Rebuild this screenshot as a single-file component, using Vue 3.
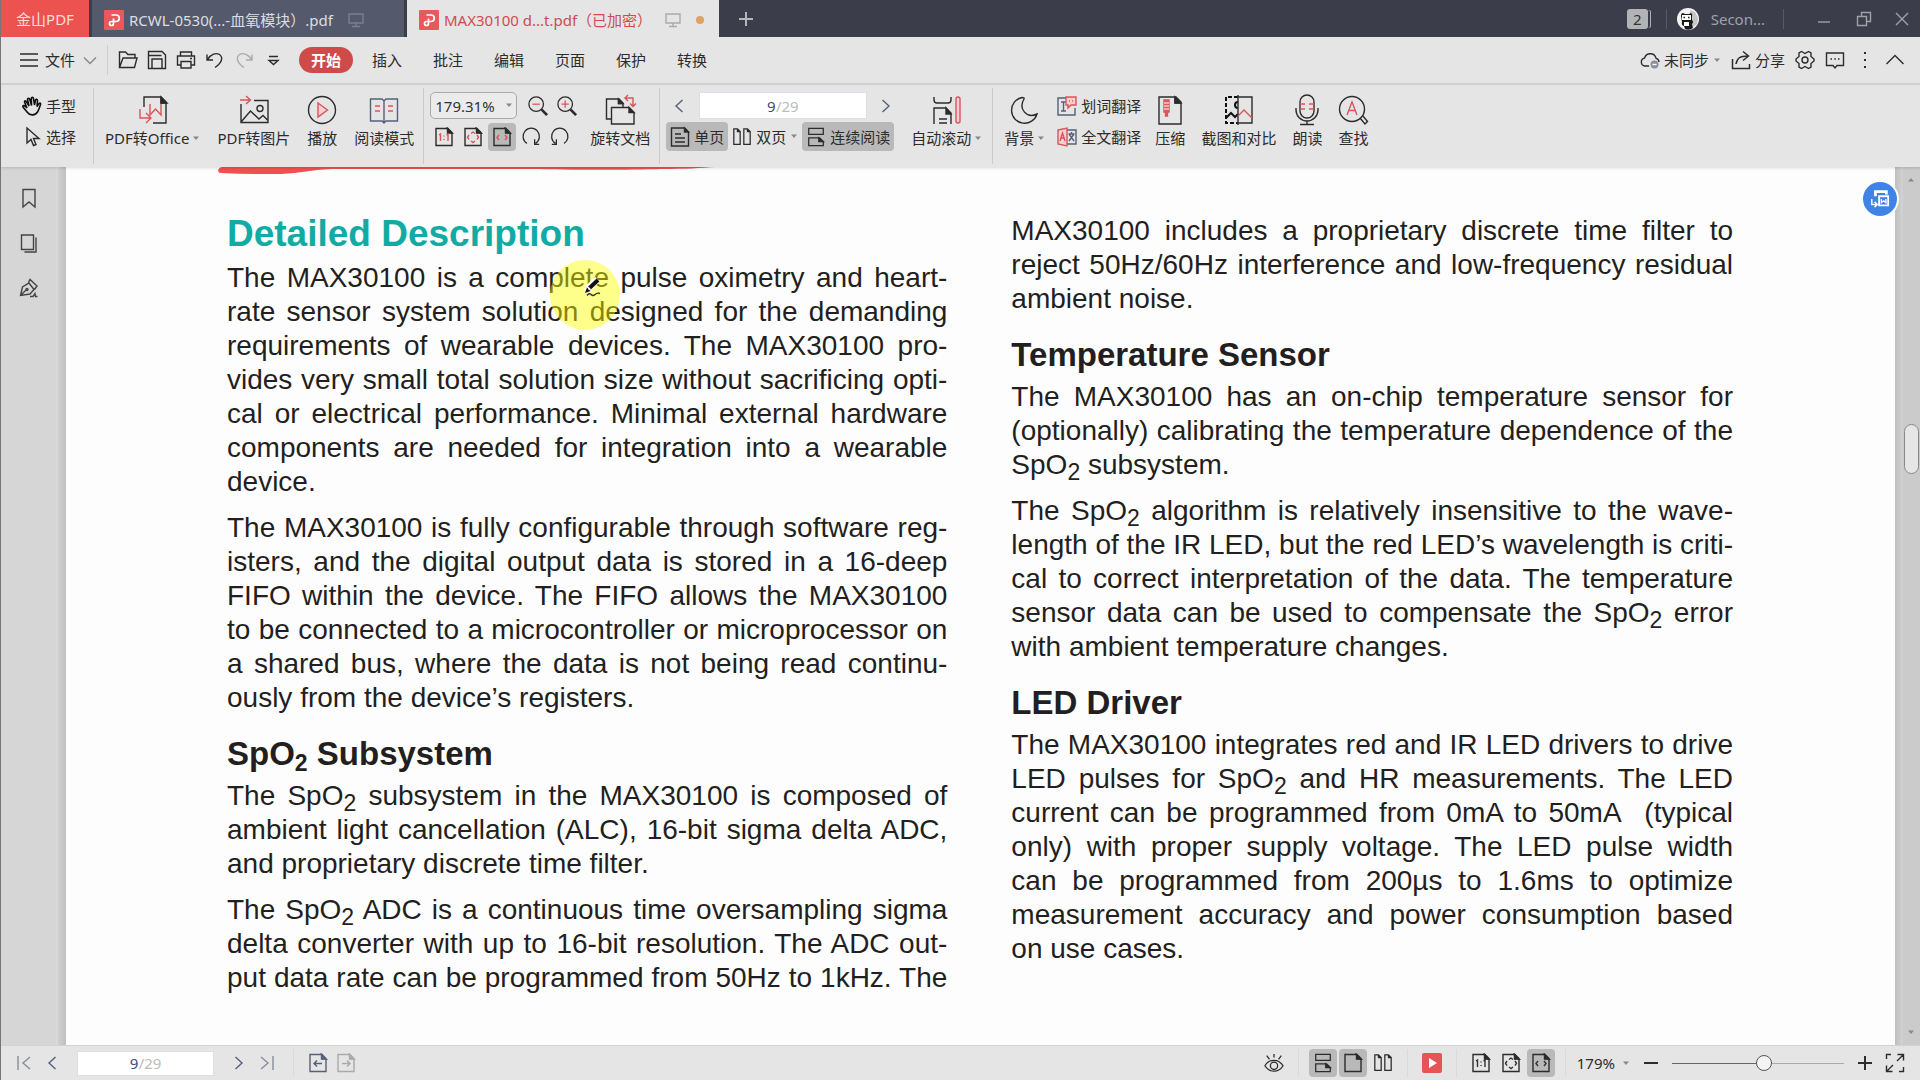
<script setup>
import { ref } from 'vue';

const zoom = ref('179.31%');
const page = ref('9');
const slider = ref(54);
const activeMenu = ref('开始');

const menus = ['开始', '插入', '批注', '编辑', '页面', '保护', '转换'];

const leftColumn = [
  { type: 'title', text: 'Detailed Description' },
  {
    type: 'para',
    lines: [
      'The MAX30100 is a complete pulse oximetry and heart-',
      'rate sensor system solution designed for the demanding',
      'requirements of wearable devices. The MAX30100 pro-',
      'vides very small total solution size without sacrificing opti-',
      'cal or electrical performance. Minimal external hardware',
      'components are needed for integration into a wearable',
      'device.'
    ]
  },
  {
    type: 'para',
    lines: [
      'The MAX30100 is fully configurable through software reg-',
      'isters, and the digital output data is stored in a 16-deep',
      'FIFO within the device. The FIFO allows the MAX30100',
      'to be connected to a microcontroller or microprocessor on',
      'a shared bus, where the data is not being read continu-',
      'ously from the device’s registers.'
    ]
  },
  { type: 'heading', text: 'SpO2 Subsystem' },
  {
    type: 'para',
    lines: [
      'The SpO2 subsystem in the MAX30100 is composed of',
      'ambient light cancellation (ALC), 16-bit sigma delta ADC,',
      'and proprietary discrete time filter.'
    ]
  },
  {
    type: 'para',
    continues: true,
    lines: [
      'The SpO2 ADC is a continuous time oversampling sigma',
      'delta converter with up to 16-bit resolution. The ADC out-',
      'put data rate can be programmed from 50Hz to 1kHz. The'
    ]
  }
];

const rightColumn = [
  {
    type: 'para',
    lines: [
      'MAX30100 includes a proprietary discrete time filter to',
      'reject 50Hz/60Hz interference and low-frequency residual',
      'ambient noise.'
    ]
  },
  { type: 'heading', text: 'Temperature Sensor' },
  {
    type: 'para',
    lines: [
      'The MAX30100 has an on-chip temperature sensor for',
      '(optionally) calibrating the temperature dependence of the',
      'SpO2 subsystem.'
    ]
  },
  {
    type: 'para',
    lines: [
      'The SpO2 algorithm is relatively insensitive to the wave-',
      'length of the IR LED, but the red LED’s wavelength is criti-',
      'cal to correct interpretation of the data. The temperature',
      'sensor data can be used to compensate the SpO2 error',
      'with ambient temperature changes.'
    ]
  },
  { type: 'heading', text: 'LED Driver' },
  {
    type: 'para',
    lines: [
      'The MAX30100 integrates red and IR LED drivers to drive',
      'LED pulses for SpO2 and HR measurements. The LED',
      'current can be programmed from 0mA to 50mA\u00a0 (typical',
      'only) with proper supply voltage. The LED pulse width',
      'can be programmed from 200µs to 1.6ms to optimize',
      'measurement accuracy and power consumption based',
      'on use cases.'
    ]
  }
];

const columns = [leftColumn, rightColumn];

// the 2 of SpO2 becomes a part of its own
function parts(text) {
  return text.split(/(?<=SpO)(2)/);
}
</script>

<template>
  <svg class="sprite" aria-hidden="true">
    <symbol id="logo" viewBox="0 0 20 20">
      <rect width="20" height="20" rx="1" fill="#e9585a" stroke="none" />
      <path d="M7.500 5h4.500a3 3 0 0 1 0 6.500H7.500a2 2 0 1 0 2 2V8.500" stroke="#fff" stroke-width="1.700" />
    </symbol>
    <symbol id="monitor" viewBox="0 0 16 16">
      <path d="M1 2h14v9H1zM8 11v3M4 14.500h8" />
    </symbol>
    <symbol id="caret" viewBox="0 0 8 5"><path d="M1 0.500h6L4 4z" fill="#888" stroke="none" /></symbol>
    <symbol id="prev" viewBox="0 0 10 16"><path d="M8.500 2L2 8l6.500 6" /></symbol>
    <symbol id="next" viewBox="0 0 10 16"><path d="M1.500 2L8 8l-6.500 6" /></symbol>
    <symbol id="page" viewBox="0 0 20 20">
      <path d="M2 1.500h12l4 4v13H2zM13.500 1.500l.5 4 4 .5z" />
      <path d="M13.500 1.500v4.500H18z" fill="currentColor" />
    </symbol>
    <symbol id="page-fit" viewBox="0 0 20 20">
      <use href="#page" />
      <path d="M8 6.500l2-1.500 2 1.500M8 14l2 1.500 2-1.500M6 8l-1.500 2.300L6 12.500M14 8l1.500 2.300-1.500 2.200" class="accent" />
    </symbol>
    <symbol id="page-width" viewBox="0 0 20 20">
      <use href="#page" />
      <path d="M7 8l-2 2.500L7 13M13 8l2 2.500-2 2.500" class="accent" />
    </symbol>
    <symbol id="page-real" viewBox="0 0 20 20">
      <use href="#page" />
      <path d="M5 8l1.500-1v7M12.500 8l1.500-1v7M10 8.500v1M10 12v1" class="accent" />
    </symbol>
    <symbol id="two-pages" viewBox="0 0 22 22">
      <path d="M2 2h4l3 3v14H2zM13 2h4l3 3v14h-7zM6 2v3h3M17 2v3h3" />
    </symbol>
    <symbol id="continuous" viewBox="0 0 20 22">
      <path d="M2 1.500h16V8H2zM2 20.500V12h12l4 4v4.500z" /><path d="M13 12v4h5z" fill="currentColor" />
    </symbol>
  </svg>

  <div class="app">
    <header class="tabs">
      <button class="home">金山PDF</button>
      <button class="tab">
        <svg class="i20"><use href="#logo" /></svg>
        <span class="name">RCWL-0530(...-血氧模块）.pdf</span>
        <svg class="i16 dim"><use href="#monitor" /></svg>
      </button>
      <button class="tab current">
        <svg class="i20"><use href="#logo" /></svg>
        <span class="name">MAX30100 d...t.pdf（已加密）</span>
        <svg class="i16 dim"><use href="#monitor" /></svg>
        <i class="unsaved"></i>
      </button>
      <button class="plus" aria-label="新建">
        <svg class="i16" viewBox="0 0 16 16"><path d="M8 1v14M1 8h14" stroke-width="2" /></svg>
      </button>
      <div class="window">
        <span class="count">2</span>
        <i class="bar"></i>
        <svg class="avatar" viewBox="0 0 22 22">
          <circle cx="11" cy="11" r="11" fill="#f3f3f3" stroke="none" />
          <path d="M13 2l5 2 3 6-1 6-4 3-3-8z" fill="#c4c6c4" stroke="none" />
          <path d="M4 8q0-3 2-3l2 1h4l2-1q2 1 1 3v4q2 2 0 4l1 4q-4 3-8 1l-1-3q-3-1-2-4z" fill="#191919" stroke="none" />
          <path d="M5 7h9v5H5zM7 14h5v4H7z" fill="#fff" stroke="none" />
          <path d="M6.500 9.500H8M11 9.500h1.500" stroke="#191919" />
        </svg>
        <span class="user">Secon...</span>
        <i class="bar"></i>
        <button class="min" aria-label="最小化"><svg class="i16" viewBox="0 0 16 16"><path d="M2 11h12" /></svg></button>
        <button class="restore" aria-label="还原">
          <svg class="i16" viewBox="0 0 16 16"><path d="M1.500 5.500h9v9h-9zM5.500 5.500v-4h9v9h-4" /></svg>
        </button>
        <button class="close" aria-label="关闭"><svg class="i16" viewBox="0 0 16 16"><path d="M2 2l12 12M14 2L2 14" /></svg></button>
      </div>
    </header>

    <nav class="menu">
      <button class="file">
        <svg class="i20" viewBox="0 0 20 20"><path d="M1 4h18M1 10h18M1 16h18" /></svg>
        文件
        <svg class="chev" viewBox="0 0 14 14"><path d="M1 4.500l6 6 6-6" /></svg>
      </button>
      <div class="quick">
        <button aria-label="打开">
          <svg class="i20" viewBox="0 0 20 20"><path d="M1.500 17.500V2h6l2.500 2.500h7V8M1.500 17.500L5 8h14l-2.500 9.500z" /></svg>
        </button>
        <button aria-label="保存">
          <svg class="i20" viewBox="0 0 20 20"><path d="M1.500 1.500H15L18.500 5v13.500h-17zM1.500 5.500h13M5 18.500V9h10v9.500" /></svg>
        </button>
        <button aria-label="打印">
          <svg class="i20" viewBox="0 0 20 20"><path d="M4.500 6V2h11v4M4.500 15h-3V6h17v9h-3M5 11.500h10v6.500H5zM14 8.500h2" /></svg>
        </button>
        <button aria-label="撤销">
          <svg class="i20" viewBox="0 0 20 20"><path d="M2 4.500v5.500h6M2.500 9.500C6 4 11 2.500 14.500 4.500c4 3 2.500 8-4.500 13" /></svg>
        </button>
        <button aria-label="重做" class="dim">
          <svg class="i20" viewBox="0 0 20 20"><path d="M18 4.500v5.500h-6M17.500 9.500C14 4 9 2.500 5.500 4.500c-4 3-2.500 8 4.500 13" /></svg>
        </button>
        <button aria-label="更多">
          <svg class="i20" viewBox="0 0 20 20"><path d="M6 6.500h9M6 10.500l4.500 4 4.500-4z" /></svg>
        </button>
      </div>
      <div class="menus">
        <button
          v-for="item in menus"
          :key="item"
          :class="{ active: item === activeMenu }"
          @click="activeMenu = item"
        >{{ item }}</button>
      </div>
      <div class="extras">
        <button>
          <svg class="i20" viewBox="0 0 20 20">
            <path d="M9 16H5a4 4 0 0 1-.5-7.900 6 6 0 0 1 11.600.2A4 4 0 0 1 19 12" />
            <circle cx="14.500" cy="14.500" r="4" fill="#8b90a0" stroke="none" /><path d="M12.500 14.500h4" stroke="#fff" />
          </svg>
          未同步<svg class="caret"><use href="#caret" /></svg>
        </button>
        <button>
          <svg class="i20" viewBox="0 0 20 20"><path d="M1.500 9v9.500h17V14M5 14c1-6 4-8 12-8M12 1.500L17.500 6 12 10.500" stroke-width="1.500" /></svg>
          分享
        </button>
        <button aria-label="设置">
          <svg class="i20" viewBox="0 0 20 20">
            <path d="M6.500 1.500L10 3.500l3.500-2 2.500 1.500v3.500L19 9v2l-3 2.500V17l-2.500 1.500-3.500-2-3.500 2L4 17v-3.500L1 11V9l3-2.500V3z" />
            <circle cx="10" cy="10" r="3" />
          </svg>
        </button>
        <button aria-label="反馈">
          <svg class="i20" viewBox="0 0 20 20"><path d="M1.500 3h17v12.500H12L10 18l-2-2.500H1.500z" /><path d="M5.500 9h1.500M9.300 9h1.500M13 9h1.500" stroke-width="1.500" /></svg>
        </button>
        <button aria-label="更多选项">
          <svg class="i20" viewBox="0 0 20 20"><path d="M9 3h2M9 10h2M9 17h2" stroke-width="2" /></svg>
        </button>
        <button aria-label="收起">
          <svg class="i20" viewBox="0 0 20 20"><path d="M1.500 14L10 5.500l8.500 8.500" /></svg>
        </button>
      </div>
    </nav>

    <section class="toolbar">
      <div class="group modes">
        <div class="stack">
          <button class="line">
            <svg class="i20" viewBox="0 0 20 20">
              <path d="M5.500 16.500L1 11c-.5-1.500 1-2 2.500-.5L5 12 2.500 6c0-1.500 1.500-1.500 2 0L7 10 5.500 3.500c0-1.700 2-1.700 2.300 0L9.500 9.500 9.300 2.500c.2-1.500 2-1.500 2.200 0L12.500 9l1-5c.5-1.300 2-.8 2 .5l-.5 6 2-3c1-1 2-.3 1.500 1-1 3-1.500 5-3 7.500-2 3.500-7.500 4-10 .5z" class="ink" />
            </svg>
            手型
          </button>
          <button class="line">
            <svg class="i20" viewBox="0 0 20 20"><path d="M5 1v15l4-3.500 2.500 6 2.500-1-2.500-6H17z" /></svg>
            选择
          </button>
        </div>
      </div>

      <div class="group">
        <button class="tool">
          <svg class="i30" viewBox="0 0 30 30">
            <path d="M6 12V2h17l5 5v21H15M23 2v6h6" /><path d="M23 2v6h6z" fill="currentColor" />
            <path d="M12 9v11l5.500-6 5.500 6V9M2 14v9h10M8 18l5 5-5 5" class="accent" />
          </svg>
          <span>PDF转Office<svg class="caret"><use href="#caret" /></svg></span>
        </button>
        <button class="tool">
          <svg class="i30" viewBox="0 0 30 30">
            <path d="M15 5.500h14v22H2V9M2 27l9.500-11L20 24l4-3.500 5 5" /><circle cx="21" cy="13.500" r="3" />
            <path d="M1 5h10M7 1l4.500 4L7 9" class="accent" />
          </svg>
          <span>PDF转图片</span>
        </button>
        <button class="tool">
          <svg class="i30" viewBox="0 0 30 30"><circle cx="15" cy="15" r="13.500" /><path d="M11 8l9.500 7L11 22z" class="accent tint" /></svg>
          <span>播放</span>
        </button>
        <button class="tool">
          <svg class="i30 slate" viewBox="0 0 30 30">
            <path d="M1.500 4H13l2 2 2-2h11.500v22H17l-2 2-2-2H1.500zM15 6v21" />
            <path d="M6 11h5M6 16h5M19 11h5M19 16h5" class="accent" />
          </svg>
          <span>阅读模式</span>
        </button>
      </div>

      <div class="group zooming">
        <div class="stack">
          <div class="row">
            <label class="zoom">
              <select v-model="zoom" aria-label="缩放比例"><option>179.31%</option></select>
              <svg class="caret"><use href="#caret" /></svg>
            </label>
            <button class="mini" aria-label="缩小">
              <svg class="i22" viewBox="0 0 22 22"><circle cx="9" cy="9" r="8" /><path d="M15 15l6 6" stroke-width="3" /><path d="M5 9h8" class="accent" /></svg>
            </button>
            <button class="mini" aria-label="放大">
              <svg class="i22" viewBox="0 0 22 22"><circle cx="9" cy="9" r="8" /><path d="M15 15l6 6" stroke-width="3" /><path d="M5 9h8M9 5v8" class="accent" /></svg>
            </button>
          </div>
          <div class="row">
            <button class="mini" aria-label="实际大小"><svg class="i22 red"><use href="#page-real" /></svg></button>
            <button class="mini" aria-label="适合页面"><svg class="i22 red"><use href="#page-fit" /></svg></button>
            <button class="mini on" aria-label="适合宽度"><svg class="i22 red"><use href="#page-width" /></svg></button>
            <button class="mini" aria-label="顺时针旋转">
              <svg class="i22" viewBox="0 0 22 22"><path d="M6.500 18A9 9 0 1 1 16 18M15 13.500V19h5" /></svg>
            </button>
            <button class="mini" aria-label="逆时针旋转">
              <svg class="i22" viewBox="0 0 22 22"><path d="M15.500 18A9 9 0 1 0 6 18M7 13.500V19H2" /></svg>
            </button>
          </div>
        </div>
        <button class="tool">
          <svg class="i30" viewBox="0 0 30 30">
            <path d="M6 24H1.500V4H14l4 4v4M13.500 4v4.500H18M6.500 12.500H24l5 5V29H6.500z" /><path d="M13.500 4v4.500H18zM24 12.500v5h5z" fill="currentColor" />
            <path d="M23 0l-3 3 3 3M20 3h8v8M25 8.500l3 3 3-3" class="accent" />
          </svg>
          <span>旋转文档</span>
        </button>
      </div>

      <div class="group paging">
        <div class="stack">
          <div class="row pager">
            <button class="arrow" aria-label="上一页"><svg><use href="#prev" /></svg></button>
            <label class="pagebox"><input v-model="page" aria-label="页码" /><span>/29</span></label>
            <button class="arrow" aria-label="下一页"><svg><use href="#next" /></svg></button>
          </div>
          <div class="row views">
            <button class="view on">
              <svg class="i20" viewBox="0 0 20 20"><path d="M1.500 1h13l4 4v14h-17z" /><path d="M14.500 1v4h4z" fill="currentColor" /><path d="M5 7h6M5 11h10M5 15h10" /></svg>
              单页
            </button>
            <button class="view">
              <svg class="i20"><use href="#two-pages" /></svg>
              双页<svg class="caret"><use href="#caret" /></svg>
            </button>
            <button class="view on">
              <svg class="i20"><use href="#continuous" /></svg>
              连续阅读
            </button>
          </div>
        </div>
        <button class="tool">
          <svg class="i30" viewBox="0 0 30 30">
            <path d="M2 2v3c0 2 1 3 3 3h11c2 0 3-1 3-3V2M2 29V13h12l5 5v11M7 24h8M7 28h8" /><path d="M14 13v6h5z" fill="currentColor" />
            <rect x="24" y="2" width="4" height="26" rx="2" class="accent tint" />
          </svg>
          <span>自动滚动<svg class="caret"><use href="#caret" /></svg></span>
        </button>
      </div>

      <div class="group last">
        <button class="tool">
          <svg class="i30" viewBox="0 0 30 30"><path d="M12 2.500A13 13 0 1 0 27 19C17 24 8 14 14 4q.5-1.500-2-1.500z" /></svg>
          <span>背景<svg class="caret"><use href="#caret" /></svg></span>
        </button>
        <div class="stack">
          <button class="line">
            <svg class="i20 slate" viewBox="0 0 20 20">
              <path d="M9 2H1v17h17v-7M4 6h5M6.500 6v9M4 15h5" /><path d="M9 1h10v8h-5l-3 3V9H9z" class="accent tint" /><path d="M12 5h1M15 5h1" class="accent" />
            </svg>
            划词翻译
          </button>
          <button class="line">
            <svg class="i20 slate" viewBox="0 0 20 20">
              <path d="M10 3h9v14h-9M11.500 7h6M14.500 5v2M12 14l5-7M12 7l5 7" /><path d="M1 3l9-2v18l-9-2zM3 14l2.500-8L8 14M4 11h3" class="accent tint" />
            </svg>
            全文翻译
          </button>
        </div>
        <button class="tool">
          <svg class="i30" viewBox="0 0 30 30">
            <path d="M4 2h17l5 5v22H4zM20 2v6h6" /><path d="M20 2v6h6z" fill="currentColor" />
            <path d="M9 5h5v12h-1.500v4h-2v-4H9z" fill="#e55a5e" class="accent" /><path d="M9 8h5M9 11h5M9 14h5" stroke="#f3caca" />
          </svg>
          <span>压缩</span>
        </button>
        <button class="tool">
          <svg class="i30" viewBox="0 0 30 30">
            <path d="M14 2H2v26h12" stroke="#111" stroke-width="2" stroke-dasharray="4 2" />
            <path d="M14 7a3 3 0 1 0 0 6M2 23l5-5 4 4 3-3" stroke="#111" stroke-width="2" />
            <path d="M14 0v30M14 2h14v26H14" /><path d="M14 21l6-6 8 8" class="accent" />
          </svg>
          <span>截图和对比</span>
        </button>
        <button class="tool">
          <svg class="i30" viewBox="0 0 30 30">
            <rect x="8" y="0" width="14" height="23" rx="7" /><path d="M4 13v2a11 11 0 0 0 22 0v-2M15 26v3.500M8 29.500h14" />
            <path d="M8 9h5M17 9h5M8 14h5M17 14h5" class="accent" />
          </svg>
          <span>朗读</span>
        </button>
        <button class="tool">
          <svg class="i30" viewBox="0 0 30 30">
            <circle cx="14" cy="14" r="12.500" /><path d="M22 23l5 6 2.500-2.500-5-6" /><path d="M9 20l5-13 5 13M11 15.500h6" class="accent" />
          </svg>
          <span>查找</span>
        </button>
      </div>
    </section>

    <main class="work">
      <aside class="side">
        <button aria-label="书签"><svg class="i20" viewBox="0 0 20 20"><path d="M4 1.500h12V19l-6-5-6 5z" /></svg></button>
        <button aria-label="缩略图"><svg class="i20" viewBox="0 0 20 20"><path d="M2.500 2h12v14.500h-12zM17 4.500V19H5.500" /></svg></button>
        <button aria-label="签名">
          <svg class="i20" viewBox="0 0 20 20"><path d="M1.500 17.500L3.500 9 10 5l5 6.500L11 16zM9.500 4.500L11 1.500 18 8l-2.500 3.500M2 17l5-5M11 18.500h3l2-3 .5 3h2" /><circle cx="8" cy="11.500" r="1" /></svg>
        </button>
      </aside>
      <article class="sheet">
        <svg class="stroke" viewBox="0 0 500 8">
          <path d="M4 0C-1 1-1 6 3 6c20 1 40 1 60 1 20-1 30-4 50-5h200c40 1 100 1 130 0 25 0 40-1 54-2z" fill="#ef5150" stroke="none" />
        </svg>
        <div v-for="(column, c) in columns" :key="c" class="column">
          <template v-for="(block, b) in column" :key="b">
            <h1 v-if="block.type === 'title'">{{ block.text }}</h1>
            <h2 v-else-if="block.type === 'heading'">
              <template v-for="(part, i) in parts(block.text)" :key="i"><sub v-if="part === '2'">2</sub><template v-else>{{ part }}</template></template>
            </h2>
            <p v-else :class="{ continues: block.continues }">
              <span v-for="line in block.lines" :key="line">
                <template v-for="(part, i) in parts(line)" :key="i"><sub v-if="part === '2'">2</sub><template v-else>{{ part }}</template></template>
              </span>
            </p>
          </template>
        </div>
        <i class="halo"></i>
        <svg class="pen" viewBox="0 0 18 20">
          <path d="M3 13l2-3.500L13.500 1.500" stroke="#fff" stroke-width="7" />
          <path d="M5.500 10L14 2" stroke="#111" stroke-width="4" />
          <path d="M1 15l2-5.500L6.500 13z" fill="#111" stroke="none" />
          <path d="M4.500 11.500L6 10" stroke="#fff" stroke-width="1.500" />
          <path d="M3 17.500q2-3 4-1t4 0 5-1" stroke="#333" />
        </svg>
        <button class="convert" aria-label="转换">
          <svg class="i22" viewBox="0 0 22 22">
            <path d="M6 8V3h12v3" stroke="#fff" stroke-width="3" /><path d="M10 8h10v10H10z" stroke="#fff" stroke-width="2" />
            <path d="M12.500 11v4l2.500-2 2.500 2v-4M2 11v6h5M5 14l3 3-3 3" stroke="#fff" stroke-width="1.500" />
          </svg>
        </button>
      </article>
      <div class="scroll">
        <svg class="tip up"><use href="#caret" /></svg>
        <i class="before"></i>
        <i class="thumb"></i>
        <i class="after"></i>
        <svg class="tip"><use href="#caret" /></svg>
      </div>
    </main>

    <footer class="status">
      <button class="arrow" aria-label="首页"><svg class="end" viewBox="0 0 16 16"><path d="M2 1v14M14 2L7 8l7 6" /></svg></button>
      <button class="arrow" aria-label="上一页"><svg><use href="#prev" /></svg></button>
      <label class="pagebox"><input v-model="page" aria-label="页码" /><span>/29</span></label>
      <button class="arrow" aria-label="下一页"><svg><use href="#next" /></svg></button>
      <button class="arrow" aria-label="末页"><svg class="end" viewBox="0 0 16 16"><path d="M14 1v14M2 2l7 6-7 6" /></svg></button>
      <i class="sep"></i>
      <button class="mini slate" aria-label="后退">
        <svg class="i22" viewBox="0 0 20 20"><use href="#page" width="20" height="20" /><path d="M6 10.500h8M9 7.500l-3 3 3 3" /></svg>
      </button>
      <button class="mini dim" aria-label="前进">
        <svg class="i22" viewBox="0 0 20 20"><use href="#page" width="20" height="20" /><path d="M6 10.500h8M11 7.500l3 3-3 3" /></svg>
      </button>

      <div class="right">
        <button class="mini" aria-label="护眼">
          <svg class="i22" viewBox="0 0 22 22"><path d="M1 14c5-8 15-8 20 0-5 8-15 8-20 0zM11 1v4M3 3l3 4M19 3l-3 4" /><circle cx="11" cy="14" r="4" /></svg>
        </button>
        <i class="sep"></i>
        <div class="set">
          <button class="mini on" aria-label="连续"><svg class="i22"><use href="#continuous" /></svg></button>
          <button class="mini on" aria-label="单页"><svg class="i22"><use href="#page" /></svg></button>
          <button class="mini" aria-label="双页"><svg class="i22"><use href="#two-pages" /></svg></button>
        </div>
        <i class="sep"></i>
        <button class="mini" aria-label="播放">
          <svg class="i20" viewBox="0 0 20 20"><rect width="20" height="20" rx="2" fill="#e45557" stroke="none" /><path d="M7 5l8 5-8 5z" fill="#fff" stroke="none" /></svg>
        </button>
        <i class="sep"></i>
        <div class="set">
          <button class="mini" aria-label="实际大小"><svg class="i22"><use href="#page-real" /></svg></button>
          <button class="mini" aria-label="适合页面"><svg class="i22"><use href="#page-fit" /></svg></button>
          <button class="mini on" aria-label="适合宽度"><svg class="i22"><use href="#page-width" /></svg></button>
        </div>
        <i class="sep"></i>
        <button class="percent">179%<svg class="caret"><use href="#caret" /></svg></button>
        <button class="step" aria-label="缩小"><svg class="i16" viewBox="0 0 16 16"><path d="M1 8h14" stroke-width="2" /></svg></button>
        <input v-model="slider" class="slider" type="range" min="0" max="100" aria-label="缩放" />
        <button class="step" aria-label="放大"><svg class="i16" viewBox="0 0 16 16"><path d="M1 8h14M8 1v14" stroke-width="2" /></svg></button>
        <button class="full" aria-label="全屏">
          <svg class="i20" viewBox="0 0 20 20"><path d="M1.500 6V1.500H6M14 18.500h4.500V14M12 8l6-6M12.500 1.500h6v6M8 12l-6 6M1.500 12.500v6h6" /></svg>
        </button>
      </div>
    </footer>
  </div>
</template>

<style>
body {
  margin: 0;
}
</style>

<style scoped>
.app {
  display: flex;
  flex-direction: column;
  min-height: 100vh;
  box-sizing: border-box;
  border-left: 1px solid #77757a;
  background: #e5e5e5;
  color: #2c2c2c;
  font: 15px/20px "Noto Sans", "Noto Sans CJK SC", sans-serif;
}

.sprite {
  position: absolute;
  width: 0;
  height: 0;
}

svg {
  fill: none;
  stroke: currentColor;
  stroke-width: 1.4;
  flex: none;
  display: block;
  overflow: visible;
}

button {
  border: 0;
  padding: 0;
  background: none;
  color: inherit;
  font: inherit;
  white-space: nowrap;
  cursor: pointer;
  display: flex;
  align-items: center;
  justify-content: center;
  flex: none;
}

.i16 { width: 16px; height: 16px; }
.i20 { width: 20px; height: 20px; }
.i22 { width: 20px; height: 20px; }
.i30 { width: 30px; height: 30px; }
.caret { width: 8px; height: 5px; }
.accent { stroke: var(--accent, #d9545c); }
.tint { fill: #f7cfcf; }
.ink { stroke: #111; stroke-width: 1.6; }
.slate { color: #56607a; }
.dim { color: #aaa; }

/* tab strip */
.tabs {
  display: flex;
  height: 37px;
  background: #3b3e4a;
  color: #dcdde2;
}

.home {
  width: 88px;
  margin-right: 3px;
  background: #ec524f;
  color: #fbdcdb;
}

.tab {
  width: 312px;
  margin-right: 3px;
  padding: 2px 12px 0;
  box-sizing: border-box;
  justify-content: flex-start;
  gap: 5px;
  background: #545a6b;
}

.tab .dim { color: #7b8090; margin-left: 10px; }
.tab.current { background: #e5e5e5; color: #d14a52; margin-right: 0; }
.tab.current .dim { color: #aaa; margin-left: 8px; }

.unsaved {
  width: 8px;
  height: 8px;
  margin-left: 10px;
  border-radius: 50%;
  background: #dfa264;
}

.plus { width: 54px; color: #b4b6bd; }

.window {
  display: flex;
  align-items: center;
  margin-left: auto;
  padding-right: 10px;
  color: #9fa1a9;
}

.count {
  width: 21px;
  line-height: 20px;
  text-align: center;
  border-radius: 3px;
  background: #b1b3b6;
  color: #333;
  box-shadow: 3px 0 0 -1px #3b3e4a, 4px 0 0 -1px #b1b3b6;
}

.bar { width: 1px; height: 20px; background: #575a64; margin: 0 10px 0 18px; }
.avatar { width: 22px; height: 22px; margin-right: 12px; }
.min { margin-left: 22px; }
.restore { margin-left: 24px; }
.close { margin-left: 22px; }

/* menu row */
.menu {
  display: flex;
  align-items: center;
  height: 46px;
  border-bottom: 2px solid #d3d3d3;
}

.file { gap: 6px; padding: 0 10px 0 18px; height: 30px; border-right: 1px solid #cfcfcf; }
.chev { width: 14px; height: 14px; margin-left: 2px; color: #888; }
.quick { display: flex; gap: 9px; padding: 0 16px 0 10px; }
.menus { display: flex; gap: 7px; }
.menus button { height: 26px; padding: 0 12px; border-radius: 13px; }
.menus .active { background: #cf4b4a; color: #fff; font-weight: bold; }
.extras { display: flex; gap: 10px; margin-left: auto; padding-right: 15px; }
.extras button { gap: 4px; }

/* ribbon */
.toolbar {
  display: flex;
  height: 82px;
  position: relative;
  z-index: 2;
  background: #e5e5e5;
  box-shadow: 0 1px 3px rgba(0, 0, 0, 0.15);
}

.group {
  display: flex;
  align-items: flex-start;
  gap: 1px;
  padding: 2px 1px 0 3px;
  border-right: 1px solid #cacaca;
  height: 74px;
  margin-top: 3px;
}

.last { border: 0; gap: 0; }
.last .stack { margin: 0 6px 0 4px; }
.modes { padding-left: 21px; padding-right: 17px; }
.stack { display: flex; flex-direction: column; }
.line { height: 31px; gap: 4px; }
.row { display: flex; align-items: center; gap: 1px; height: 31px; }

.tool {
  flex-direction: column;
  padding: 5px 8px 0;
  gap: 3px;
}

.tool span { display: flex; align-items: center; gap: 3px; }

.mini { width: 28px; height: 28px; border-radius: 4px; }
.on { background: #b9b9b9; }
.zooming { padding-left: 6px; }
.zoom { position: relative; margin-right: 6px; }

.zoom select {
  appearance: none;
  width: 87px;
  height: 27px;
  box-sizing: border-box;
  padding: 0 4px;
  border: 1px solid #a9a9a9;
  border-radius: 5px;
  background: #ebebeb;
  color: #333;
  font: inherit;
}

.zoom .caret { position: absolute; right: 4px; top: 11px; }

.paging { padding-left: 6px; padding-right: 2px; }
.paging .tool { margin-left: 8px; }
.pager { justify-content: space-between; padding-left: 5px; }
.arrow { width: 16px; height: 24px; color: #56607a; }
.arrow svg { width: 10px; height: 16px; }
.arrow .end { width: 16px; color: #888d99; }
.views { gap: 4px; }
.view { height: 29px; gap: 4px; border-radius: 4px; }
.view.on { padding: 0 4px; }

.pagebox {
  display: flex;
  align-items: center;
  justify-content: center;
  width: 166px;
  height: 25px;
  background: #fff;
  box-shadow: 0 0 0 1px #dbe0e6;
  color: #bbb;
}

.pagebox input {
  width: 9px;
  padding: 0;
  border: 0;
  outline: 0;
  background: none;
  color: #3f4c75;
  font: inherit;
}

/* document */
.work {
  display: flex;
  flex: 1;
  background: #d6d6d6;
}

.side {
  display: flex;
  flex-direction: column;
  align-items: center;
  gap: 25px;
  width: 65px;
  padding: 21px 9px 0 0;
  box-sizing: border-box;
  color: #444;
  background: linear-gradient(90deg, #d6d6d6 55px, #dedede 55px, #cecece 58px, #c0c0c0);
}

.sheet {
  position: relative;
  flex: 1;
  display: grid;
  grid-template-columns: 1fr 1fr;
  gap: 64px;
  padding: 47px 162px 49px 161px;
  background: #fdfdfd;
  color: #231f20;
  font: 28px/34px "Liberation Sans", Arial, sans-serif;
}

.stroke { position: absolute; left: 152px; top: 0; width: 500px; height: 8px; }

.halo {
  position: absolute;
  left: 484px;
  top: 93px;
  width: 70px;
  height: 70px;
  border-radius: 50%;
  background: rgba(255, 255, 0, 0.45);
}

.pen { position: absolute; left: 518px; top: 111px; width: 18px; height: 20px; }

h1 {
  margin: -2px 0 5px;
  font-size: 37px;
  line-height: 44px;
  color: #12aba3;
}

h2 {
  margin: 19px 0 5px;
  font-size: 33px;
  line-height: 40px;
}

p { margin: 0; }
p + p { margin-top: 12px; }
p span { display: block; white-space: nowrap; text-align-last: justify; }
p:not(.continues) span:last-child { text-align-last: left; }
sub { font-size: 23px; line-height: 0; vertical-align: -6px; }

.convert {
  position: absolute;
  right: -2px;
  top: 15px;
  width: 34px;
  height: 34px;
  border-radius: 50%;
  background: #3f82e8;
  box-shadow: 0 0 0 2px #fff;
}

.scroll {
  display: flex;
  flex-direction: column;
  align-items: flex-end;
  width: 25px;
  background: linear-gradient(90deg, #bfbfbf, #cdcdcd 6px, #d4d4d4 7px, #cbcbcb 8px);
}

.tip { width: 8px; height: 5px; margin: 10px 5px; }
.up { transform: rotate(180deg); }
.before { flex: 232; }
.after { flex: 545; }

.thumb {
  width: 15px;
  height: 50px;
  box-sizing: border-box;
  border: 1px solid #888;
  border-radius: 8px;
  background: #e6e6e6;
  margin-right: 1px;
}

/* status bar */
.status {
  display: flex;
  align-items: center;
  height: 35px;
  padding: 0 15px;
  border-top: 1px solid #d2d2d2;
  box-sizing: border-box;
}

.status .arrow { margin-right: 12px; }
.status .pagebox { width: 135px; height: 23px; margin: 0 18px 0 10px; }
.status .arrow + .arrow { margin-right: 8px; }
.sep { width: 1px; height: 28px; margin: 0 10px; background: #dadada; }
.right { --accent: #333; display: flex; align-items: center; margin-left: auto; }
.status .mini { height: 28px; }
.set { display: flex; gap: 2px; }
.percent { gap: 7px; margin: 0 13px 0 1px; }
.red { --accent: #d9545c; }

.slider {
  appearance: none;
  width: 172px;
  height: 18px;
  margin: 0 13px;
  background: linear-gradient(90deg, #666 50%, #aaa 50%) center / 100% 1px no-repeat;
}

.slider::-webkit-slider-thumb {
  appearance: none;
  width: 16px;
  height: 16px;
  box-sizing: border-box;
  border: 1px solid #555;
  border-radius: 50%;
  background: #f4f4f4;
}

.full { margin-left: 12px; }
</style>
